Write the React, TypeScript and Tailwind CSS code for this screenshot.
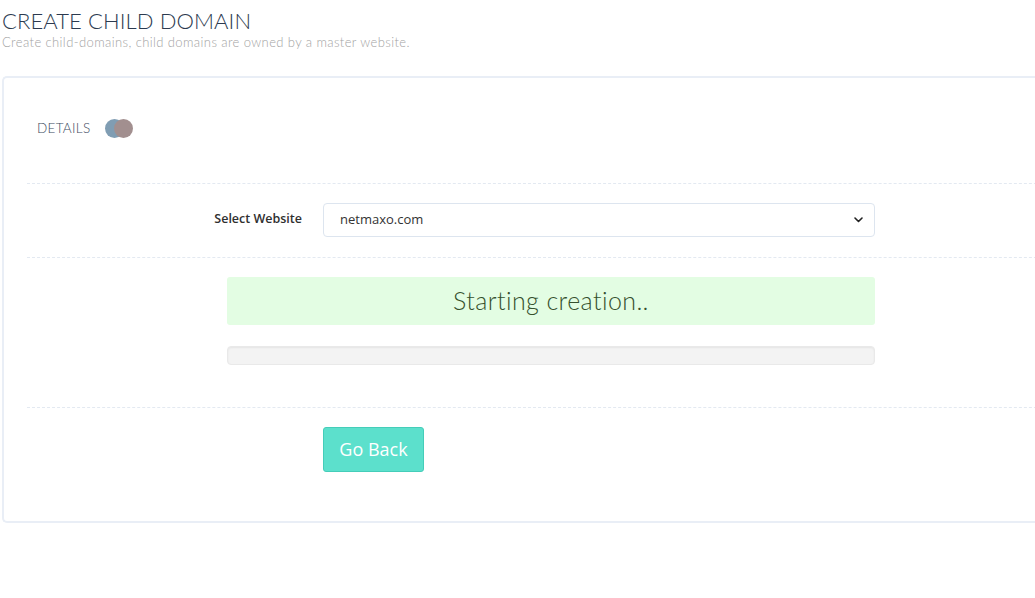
import React from "react";

const CreateChildDomain = () => {
  return (
    <div className="w-full overflow-hidden bg-white" style={{ minHeight: 598 }}>
      {/* Page header */}
      <div className="pl-[2px] pt-[8px]">
        <h1 className="font-['Lato',sans-serif] font-light text-[22px] leading-[26px] text-[#2c3a4f] tracking-[0.1px]">
          CREATE CHILD DOMAIN
        </h1>
        <p className="font-['Lato',sans-serif] font-light text-[13px] leading-[16px] text-[#a3a3a3] tracking-[0.4px]">
          Create child-domains, child domains are owned by a master website.
        </p>
      </div>

      {/* Card */}
      <div className="mt-[26px] ml-[2px] w-[1080px] h-[447px] border-2 border-r-0 border-[#e9eef6] rounded-l-[5px] pl-[23px]">
        {/* Details heading */}
        <div className="pt-[35px] pb-[40px]">
          <div className="flex items-center h-[30px] pl-[10px] gap-[14px]">
            <span className="font-['Lato',sans-serif] font-light text-[13.5px] text-[#3b4a5e] tracking-[0.3px]">
              DETAILS
            </span>
            <div className="flex items-center">
              <span className="w-[19px] h-[19px] rounded-full bg-[#809db3]" />
              <span className="w-[19px] h-[19px] rounded-full bg-[#a28f8f] -ml-[10px]" />
            </div>
          </div>
        </div>

        {/* Select website */}
        <div className="border-t border-dashed border-[#e3e9f1] pt-[19px] pb-[20px]">
          <div className="flex items-center gap-[21px]">
            <label className="w-[275px] text-right font-['Open_Sans',sans-serif] font-semibold text-[12.5px] text-[#2f2f2f] -mt-[2px]">
              Select Website
            </label>
            <div className="relative w-[552px] h-[34px]">
              <select
                defaultValue="netmaxo.com"
                className="w-full h-full appearance-none bg-white border border-[#dde5ef] rounded-[4px] pl-[16px] pr-8 font-['Open_Sans',sans-serif] text-[13px] text-[#333] outline-none"
              >
                <option>netmaxo.com</option>
              </select>
              <svg
                className="absolute right-[12px] top-[14px] pointer-events-none"
                width="9"
                height="6"
                viewBox="0 0 9 6"
                fill="none"
              >
                <path d="M1 1L4.5 4.5L8 1" stroke="#222" strokeWidth="1.6" strokeLinecap="round" strokeLinejoin="round" />
              </svg>
            </div>
          </div>
        </div>

        {/* Progress */}
        <div className="border-t border-dashed border-[#e3e9f1] pt-[19px] pb-[42px]">
          <div className="ml-[200px] w-[648px]">
            <div className="h-[48px] bg-[#e3fde3] rounded-[3px] flex items-center justify-center">
              <span className="font-['Lato',sans-serif] font-light text-[25px] text-[#35502d] tracking-[0.4px]">
                Starting creation..
              </span>
            </div>
            <div className="mt-[21px] h-[19px] bg-[#f3f3f3] border border-[#e9e9e9] rounded-[4px] shadow-[inset_0_1px_2px_rgba(0,0,0,0.06)]" />
          </div>
        </div>

        {/* Actions */}
        <div className="border-t border-dashed border-[#e3e9f1] pt-[19px]">
          <button
            type="button"
            className="ml-[296px] w-[101px] h-[45px] bg-[#5ce0cc] border border-[#45cdb9] rounded-[3px] text-white font-['Open_Sans',sans-serif] text-[18px]"
          >
            Go Back
          </button>
        </div>
      </div>
    </div>
  );
};

export default function App() {
  return <CreateChildDomain />;
}
